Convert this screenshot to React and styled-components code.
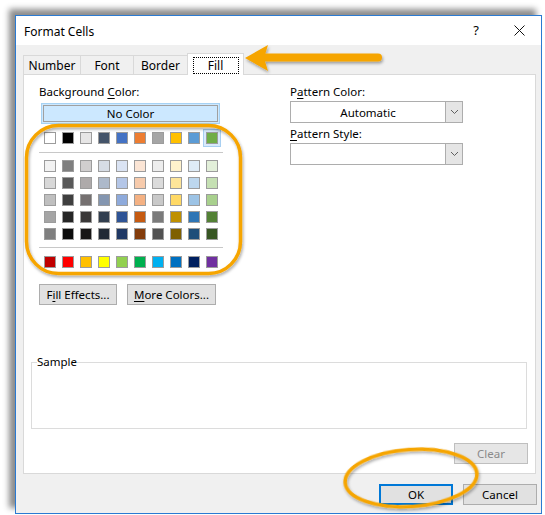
import React from "react";
import styled, { createGlobalStyle } from "styled-components";

const Global = createGlobalStyle`
  html, body { margin: 0; padding: 0; background: #ffffff; }
  body { font-family: "Noto Sans", "Open Sans", sans-serif; font-size: 11.5px; color: #000; }
  * { box-sizing: border-box; }
`;

const Page = styled.div`
  position: relative;
  width: 545px;
  height: 515px;
  padding: 15px 3px 1px 15px;
  overflow: hidden;
`;

const Window = styled.div`
  width: 527px;
  height: 499px;
  border: 1px solid #2a7ad2;
  background: #f0f0f0;
  box-shadow: -6px -6px 6px rgba(0, 0, 0, 0.45);
  display: flex;
  flex-direction: column;
`;

const TitleBar = styled.div`
  height: 29px;
  background: #ffffff;
  display: flex;
  align-items: center;
  padding-left: 8px;
`;

const Title = styled.span`
  font-size: 12px;
  line-height: 15px;
  margin-top: 1px;
`;

const TitleControls = styled.div`
  margin-left: auto;
  display: flex;
  align-items: center;
  gap: 35px;
  padding-right: 16px;
`;

const Help = styled.span`
  font-size: 13px;
  line-height: 15px;
`;

const Body = styled.div`
  flex: 1;
  display: flex;
  flex-direction: column;
  padding: 8px 5px 0 7px;
`;

const TabRow = styled.div`
  display: flex;
  align-items: flex-end;
  height: 22px;
  margin-bottom: -1px;
  position: relative;
  z-index: 1;
`;

const Tab = styled.div`
  width: ${(p) => p.$w}px;
  height: ${(p) => (p.$active ? 22 : 19)}px;
  margin-bottom: ${(p) => (p.$active ? 0 : 1)}px;
  margin-left: ${(p) => (p.$first ? 0 : -1)}px;
  border: 1px solid #d9d9d9;
  border-bottom: none;
  background: ${(p) => (p.$active ? "#ffffff" : "#f0f0f0")};
  display: flex;
  align-items: center;
  justify-content: center;
  font-size: 12px;
  position: relative;
  z-index: ${(p) => (p.$active ? 2 : 1)};
`;

const Focus = styled.span`
  display: inline-block;
  width: 46px;
  height: 17px;
  line-height: 15px;
  text-align: center;
  border: 1px dotted #000;
  margin-top: 1px;
`;

const Panel = styled.div`
  height: 400px;
  background: #ffffff;
  border: 1px solid #d9d9d9;
  display: flex;
  flex-direction: column;
  padding: 9px 8px 0 7px;
`;

const TopGrid = styled.div`
  display: grid;
  grid-template-columns: 251px 173px;
  margin-left: 8px;
`;

const Column = styled.div`
  display: flex;
  flex-direction: column;
  align-items: flex-start;
`;

const Label = styled.div`
  font-size: 11.5px;
  line-height: 15px;
  height: 15px;
  margin-top: ${(p) => p.$mt || 0}px;
  u { text-decoration: underline; text-underline-offset: 2px; }
`;

const NoColorButton = styled.div`
  margin: 4px 0 0 2px;
  width: 179px;
  height: 21px;
  border: 1px solid #a6d2f4;
  background: #cce8ff;
  box-shadow: inset 0 0 0 1px #cce8ff, inset 0 0 0 2px #a0a0a0;
  display: flex;
  align-items: center;
  justify-content: center;
  font-size: 11.5px;
`;

const Palette = styled.div`
  margin-top: 8px;
  display: flex;
  flex-direction: column;
`;

const SwatchRows = styled.div`
  display: flex;
  flex-direction: column;
  gap: 5px;
  padding-left: 5px;
`;

const SwatchRow = styled.div`
  display: flex;
  gap: 6px;
`;

const Swatch = styled.div`
  width: 12px;
  height: 12px;
  border: 1px solid #9c9c9c;
  background: ${(p) => p.$c};
  box-shadow: ${(p) =>
    p.$hot ? "0 0 0 2px #d8eafb, 0 0 0 3px #a8cff1" : "none"};
`;

const Separator = styled.div`
  width: 184px;
  height: 1px;
  background: #c8c8c8;
  margin: ${(p) => p.$m};
`;

const ButtonRow = styled.div`
  display: flex;
  gap: 10px;
  margin-top: 16px;
`;

const Button = styled.div`
  width: ${(p) => p.$w}px;
  height: 21px;
  border-width: ${(p) => (p.$default ? 2 : 1)}px;
  border-style: solid;
  border-color: ${(p) => (p.$default ? "#0078d7" : p.$disabled ? "#bfbfbf" : "#adadad")};
  background: ${(p) => (p.$disabled ? "#e6e6e6" : "#e1e1e1")};
  color: ${(p) => (p.$disabled ? "#8a8a8a" : "#000")};
  display: flex;
  align-items: center;
  justify-content: center;
  font-size: 11.5px;
  u { text-decoration: underline; text-underline-offset: 2px; }
`;

const Select = styled.div`
  margin-top: 2px;
  width: 173px;
  height: 22px;
  border: 1px solid #adadad;
  background: #ffffff;
  display: flex;
`;

const SelectValue = styled.div`
  flex: 1;
  display: flex;
  align-items: center;
  justify-content: center;
  font-size: 11.5px;
`;

const SelectArrow = styled.div`
  width: 17px;
  border-left: 1px solid #adadad;
  background: #e5e5e5;
  display: flex;
  align-items: center;
  justify-content: center;
`;

const Sample = styled.fieldset`
  margin: 50px 0 0 0;
  padding: 0;
  height: 74px;
  border: 1px solid #dcdcdc;
`;

const SampleLegend = styled.legend`
  margin-left: 5px;
  padding: 0;
  font-size: 11.5px;
  line-height: 14px;
`;

const ClearRow = styled.div`
  display: flex;
  justify-content: flex-end;
  margin-top: 14px;
  margin-right: -1px;
`;

const Footer = styled.div`
  display: flex;
  justify-content: flex-end;
  gap: 10px;
  padding-top: 10px;
  margin-right: -1px;
`;

const Overlay = styled.svg`
  position: absolute;
  left: 0;
  top: 0;
  pointer-events: none;
`;

const theme = ["#ffffff", "#000000", "#e7e6e6", "#44546a", "#4472c4", "#ed7d31", "#a5a5a5", "#ffc000", "#5b9bd5", "#70ad47"];
const tints = [
  ["#f2f2f2", "#7f7f7f", "#d0cece", "#d6dce4", "#dae3f3", "#fbe5d5", "#ededed", "#fff2cc", "#deebf6", "#e2efd9"],
  ["#d8d8d8", "#595959", "#aeaaaa", "#adb9ca", "#b4c6e7", "#f7cbac", "#dbdbdb", "#fee599", "#bdd7ee", "#c5e0b3"],
  ["#bfbfbf", "#3f3f3f", "#757070", "#8496b0", "#8eaadb", "#f4b183", "#c9c9c9", "#ffd965", "#9cc3e5", "#a8d08d"],
  ["#a5a5a5", "#262626", "#3a3838", "#323f4f", "#2f5496", "#c55a11", "#7b7b7b", "#bf9000", "#2e75b5", "#538135"],
  ["#7f7f7f", "#0c0c0c", "#171616", "#222a35", "#1f3864", "#833c0b", "#525252", "#7f6000", "#1e4e79", "#375623"],
];
const standard = ["#c00000", "#ff0000", "#ffc000", "#ffff00", "#92d050", "#00b050", "#00b0f0", "#0070c0", "#002060", "#7030a0"];

const Chevron = () => (
  <svg width="9" height="6" viewBox="0 0 9 6">
    <path d="M1 1 L4.5 4.5 L8 1" fill="none" stroke="#606060" strokeWidth="1" />
  </svg>
);

const CloseIcon = () => (
  <svg width="11" height="11" viewBox="0 0 11 11">
    <path d="M0.5 0.5 L10.5 10.5 M10.5 0.5 L0.5 10.5" stroke="#111" strokeWidth="1" />
  </svg>
);

export default function App() {
  return (
    <>
      <Global />
      <Page>
        <Window>
          <TitleBar>
            <Title>Format Cells</Title>
            <TitleControls>
              <Help>?</Help>
              <CloseIcon />
            </TitleControls>
          </TitleBar>
          <Body>
            <TabRow>
              <Tab $w={58} $first>Number</Tab>
              <Tab $w={54}>Font</Tab>
              <Tab $w={55}>Border</Tab>
              <Tab $w={57} $active>
                <Focus>Fill</Focus>
              </Tab>
            </TabRow>
            <Panel>
              <TopGrid>
                <Column>
                  <Label>
                    Background <u>C</u>olor:
                  </Label>
                  <NoColorButton>No Color</NoColorButton>
                  <Palette>
                    <SwatchRows>
                      <SwatchRow>
                        {theme.map((c, i) => (
                          <Swatch key={c} $c={c} $hot={i === 9} />
                        ))}
                      </SwatchRow>
                    </SwatchRows>
                    <Separator $m="8px 0 7px 0" />
                    <SwatchRows>
                      {tints.map((row, r) => (
                        <SwatchRow key={r}>
                          {row.map((c, i) => (
                            <Swatch key={i} $c={c} />
                          ))}
                        </SwatchRow>
                      ))}
                    </SwatchRows>
                    <Separator $m="7px 0 8px 0" />
                    <SwatchRows>
                      <SwatchRow>
                        {standard.map((c) => (
                          <Swatch key={c} $c={c} />
                        ))}
                      </SwatchRow>
                    </SwatchRows>
                  </Palette>
                  <ButtonRow>
                    <Button $w={78}>
                      F<u>i</u>ll Effects...
                    </Button>
                    <Button $w={89}>
                      <u>M</u>ore Colors...
                    </Button>
                  </ButtonRow>
                </Column>
                <Column>
                  <Label>
                    P<u>a</u>ttern Color:
                  </Label>
                  <Select>
                    <SelectValue>Automatic</SelectValue>
                    <SelectArrow>
                      <Chevron />
                    </SelectArrow>
                  </Select>
                  <Label $mt={3}>
                    <u>P</u>attern Style:
                  </Label>
                  <Select>
                    <SelectValue />
                    <SelectArrow>
                      <Chevron />
                    </SelectArrow>
                  </Select>
                </Column>
              </TopGrid>
              <Sample>
                <SampleLegend>Sample</SampleLegend>
              </Sample>
              <ClearRow>
                <Button $w={74} $disabled>
                  Clear
                </Button>
              </ClearRow>
            </Panel>
            <Footer>
              <Button $w={74} $default>
                OK
              </Button>
              <Button $w={74}>Cancel</Button>
            </Footer>
          </Body>
        </Window>
        <Overlay width="545" height="515" viewBox="0 0 545 515">
          <defs>
            <filter id="sh" x="-20%" y="-20%" width="140%" height="140%">
              <feDropShadow dx="1" dy="2" stdDeviation="1.6" floodColor="#000" floodOpacity="0.35" />
            </filter>
          </defs>
          <g filter="url(#sh)" fill="none" stroke="#f6a500" strokeWidth="3.5">
            <rect x="26.5" y="125.5" width="214" height="148" rx="32" ry="32" />
            <ellipse cx="411" cy="478" rx="66" ry="28.5" transform="rotate(-4 411 478)" />
          </g>
          <g filter="url(#sh)">
            <line x1="262" y1="57.5" x2="378" y2="57.5" stroke="#f6a500" strokeWidth="8" strokeLinecap="round" />
            <path d="M245 58 L268 45 L264 58 L268 71 Z" fill="#f6a500" />
          </g>
        </Overlay>
      </Page>
    </>
  );
}
